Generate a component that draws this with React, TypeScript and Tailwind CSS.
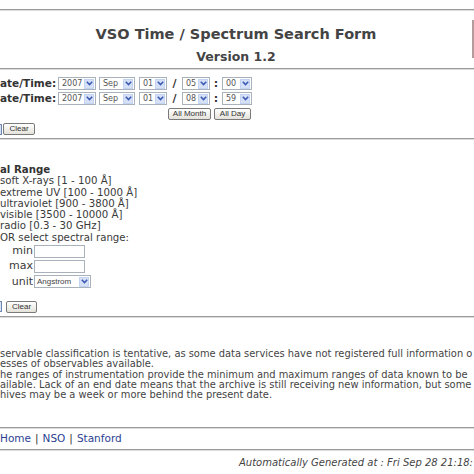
import type { ReactNode } from "react";

const Rule = () => <div className="h-[2px] w-full border-t border-[#9c9c9c] border-b border-b-[#dcdcdc]" />;

const Chevron = () => (
  <svg width="7" height="5" viewBox="0 0 7 5">
    <path d="M0.8 0.8 L3.5 3.6 L6.2 0.8" fill="none" stroke="#3c5ab4" strokeWidth="1.6" />
  </svg>
);

const Sel = ({ value, w }: { value: string; w: string }) => (
  <div className={`flex h-[13px] items-center border border-[#a9b1bb] bg-white ${w}`}>
    <span className="flex-1 pl-[3px] text-[8px] leading-none text-[#555]">{value}</span>
    <span className="mr-[1px] flex h-[10px] w-[10px] items-center justify-center border border-[#c3d3f2] bg-[#d6e1f8]">
      <Chevron />
    </span>
  </div>
);

const Btn = ({ children, w }: { children: ReactNode; w: string }) => (
  <div
    className={`flex h-[12px] items-center justify-center rounded-[2px] border border-[#7a7a7a] bg-gradient-to-b from-white to-[#e4e2da] text-[8px] leading-none text-[#333] ${w}`}
    style={{ fontFamily: '"Liberation Sans", Arial, sans-serif' }}
  >
    {children}
  </div>
);

const Stub = () => <div className="h-[11px] w-[2px] rounded-r-[1px] border border-l-0 border-[#6c86b4] bg-[#d8e2f3]" />;

const DateRow = ({ v }: { v: string[] }) => (
  <div className="flex h-[15px] items-center">
    <span className="w-[58px] whitespace-nowrap text-[10.5px] font-bold leading-none text-[#333]">ate/Time:</span>
    <Sel value={v[0]} w="w-[38px]" />
    <div className="w-[3px]" />
    <Sel value={v[1]} w="w-[36px]" />
    <div className="w-[4px]" />
    <Sel value={v[2]} w="w-[28px]" />
    <span className="w-[15px] text-center text-[11px] font-bold leading-none text-[#333]">/</span>
    <Sel value={v[3]} w="w-[28px]" />
    <span className="w-[12px] text-center text-[11px] font-bold leading-none text-[#333]">:</span>
    <Sel value={v[4]} w="w-[30px]" />
  </div>
);

const ranges = [
  "soft X-rays [1 - 100 Å]",
  "extreme UV [100 - 1000 Å]",
  "ultraviolet [900 - 3800 Å]",
  "visible [3500 - 10000 Å]",
  "radio [0.3 - 30 GHz]",
  "OR select spectral range:",
];

export default function App() {
  return (
    <div
      className="h-[474px] w-[474px] overflow-hidden bg-white text-[#3a3a3a]"
      style={{ fontFamily: '"DejaVu Sans", Verdana, sans-serif' }}
    >
      <div className="h-[9px]" />
      <Rule />
      {/* header */}
      <div className="flex h-[57px]">
        <div className="flex flex-1 flex-col items-center">
          <h1 className="mt-[15px] text-[14.5px] font-bold leading-[16px] text-[#444]">VSO Time / Spectrum Search Form</h1>
          <p className="mt-[8px] text-[12.5px] font-bold leading-[14px] text-[#444]">Version 1.2</p>
        </div>
        <div className="mt-[9px] h-[38px] w-[2px] bg-[#b59c9c]" />
      </div>
      <Rule />

      {/* time range */}
      <div className="pt-[6px]">
        <DateRow v={["2007", "Sep", "01", "05", "00"]} />
        <DateRow v={["2007", "Sep", "01", "08", "59"]} />
        <div className="mt-[2px] flex h-[12px] gap-[3px] pl-[168px]">
          <Btn w="w-[43px]">All Month</Btn>
          <Btn w="w-[37px]">All Day</Btn>
        </div>
        <div className="mt-[3px] flex h-[12px] items-center gap-[1px]">
          <Stub />
          <Btn w="w-[32px]">Clear</Btn>
        </div>
      </div>
      <div className="h-[3px]" />
      <Rule />

      {/* spectral range */}
      <div className="pt-[24px] text-[10.2px] leading-[11.3px]">
        <p className="font-bold text-[#333]">al Range</p>
        {ranges.map((r) => (
          <p key={r}>{r}</p>
        ))}
        <div className="mt-[2px] flex flex-col gap-[3px]">
          {["min", "max"].map((l) => (
            <div key={l} className="flex h-[12px] items-center">
              <span className="w-[34px] pr-[1px] text-right text-[11px]">{l}</span>
              <div className="h-[13px] w-[51px] border border-[#a9b1bb] bg-white" />
            </div>
          ))}
          <div className="flex h-[13px] items-center">
            <span className="w-[34px] pr-[1px] text-right text-[11px]">unit</span>
            <div className="flex h-[13px] w-[57px] items-center border border-[#a9b1bb] bg-white">
              <span
                className="flex-1 pl-[2px] text-[8px] leading-none text-[#444]"
                style={{ fontFamily: '"Liberation Sans", Arial, sans-serif' }}
              >
                Angstrom
              </span>
              <span className="mr-[1px] flex h-[10px] w-[10px] items-center justify-center border border-[#c3d3f2] bg-[#d6e1f8]">
                <Chevron />
              </span>
            </div>
          </div>
        </div>
        <div className="mt-[13px] flex h-[11px] items-center gap-[4px]">
          <Stub />
          <Btn w="w-[31px]">Clear</Btn>
        </div>
      </div>
      <div className="h-[4px]" />
      <Rule />

      {/* notes */}
      <div className="whitespace-nowrap pt-[31px] text-[9.9px] leading-[10.3px] text-[#444]">
        <p>servable classification is tentative, as some data services have not registered full information o</p>
        <p>esses of observables available.</p>
        <p>he ranges of instrumentation provide the minimum and maximum ranges of data known to be</p>
        <p>ailable. Lack of an end date means that the archive is still receiving new information, but some</p>
        <p>hives may be a week or more behind the present date.</p>
      </div>
      <div className="h-[26px]" />
      <Rule />
      <div className="flex h-[20px] items-center text-[10.5px] text-[#2b3f91]">
        <a href="#">Home</a>
        <span className="px-[4px] text-[#333]">|</span>
        <a href="#">NSO</a>
        <span className="px-[4px] text-[#333]">|</span>
        <a href="#">Stanford</a>
      </div>
      <Rule />
      <p className="mt-[4px] whitespace-nowrap pr-[1px] text-right text-[10px] italic text-[#444]">
        Automatically Generated at : Fri Sep 28 21:18:
      </p>
    </div>
  );
}
